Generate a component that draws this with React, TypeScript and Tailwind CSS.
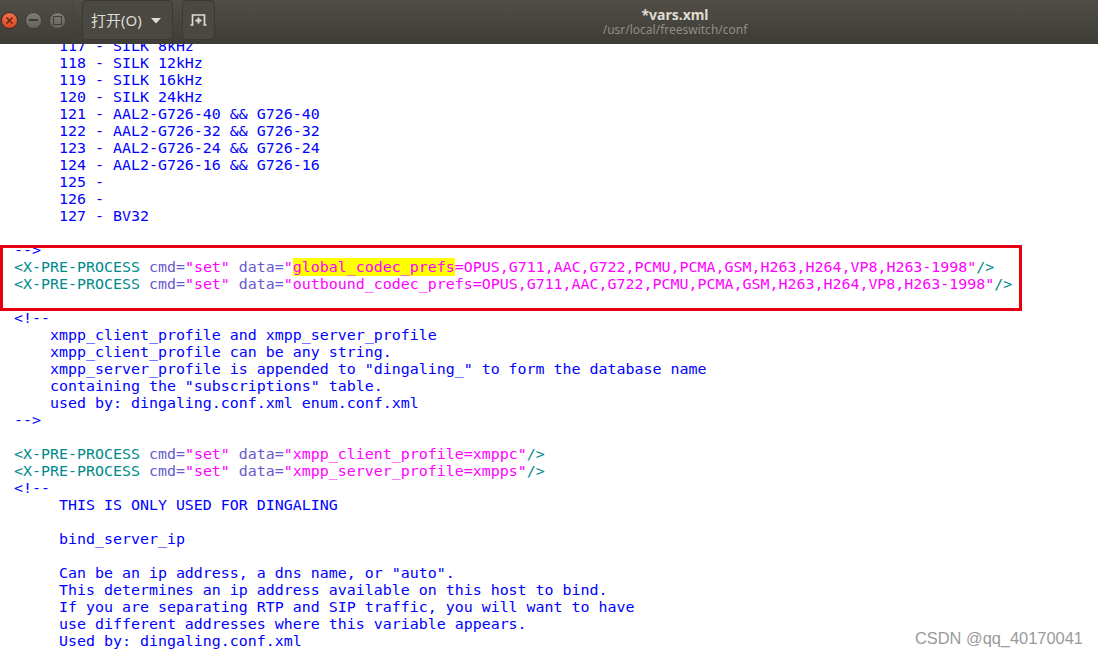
import React from "react";

const T = ({ c }: { c: string }) => <span className="text-[#008a8c]">{c}</span>;
const A = ({ c }: { c: string }) => <span className="text-[#6a5acd]">{c}</span>;
const S = ({ c }: { c: string }) => <span className="text-[#ff00ff]">{c}</span>;

function Pre({ value }: { value: React.ReactNode }) {
  return (
    <div className="h-[17px]">
      <T c="<X-PRE-PROCESS " />
      <A c="cmd=" />
      <S c='"set"' />
      <A c=" data=" />
      {value}
      <T c="/>" />
    </div>
  );
}

const blueTop = [
  "     117 - SILK 8kHz",
  "     118 - SILK 12kHz",
  "     119 - SILK 16kHz",
  "     120 - SILK 24kHz",
  "     121 - AAL2-G726-40 && G726-40",
  "     122 - AAL2-G726-32 && G726-32",
  "     123 - AAL2-G726-24 && G726-24",
  "     124 - AAL2-G726-16 && G726-16",
  "     125 -",
  "     126 -",
  "     127 - BV32",
  " ",
  "-->",
];
const blueMid = [
  " ",
  "<!--",
  "    xmpp_client_profile and xmpp_server_profile",
  "    xmpp_client_profile can be any string.",
  '    xmpp_server_profile is appended to "dingaling_" to form the database name',
  '    containing the "subscriptions" table.',
  "    used by: dingaling.conf.xml enum.conf.xml",
  "-->",
  " ",
];
const blueEnd = [
  "<!--",
  "     THIS IS ONLY USED FOR DINGALING",
  " ",
  "     bind_server_ip",
  " ",
  '     Can be an ip address, a dns name, or "auto".',
  "     This determines an ip address available on this host to bind.",
  "     If you are separating RTP and SIP traffic, you will want to have",
  "     use different addresses where this variable appears.",
  "     Used by: dingaling.conf.xml",
];

const Blue = ({ lines }: { lines: string[] }) => (
  <>
    {lines.map((l, i) => (
      <div key={i} className="h-[17px] text-[#0000ff]">{l}</div>
    ))}
  </>
);

const codecs = "OPUS,G711,AAC,G722,PCMU,PCMA,GSM,H263,H264,VP8,H263-1998";

export default function App() {
  return (
    <div className="relative flex h-[655px] w-[1098px] flex-col overflow-hidden bg-white">
      <header className="z-10 flex h-[44px] shrink-0 items-center bg-gradient-to-b from-[#514e47] to-[#3d3c37] font-['Noto_Sans','Noto_Sans_CJK_SC',sans-serif]">
        <div className="mb-[4px] ml-[1px] flex items-center gap-[7px]">
          <div className="flex h-[17px] w-[17px] items-center justify-center rounded-full border border-[#3c2a20] bg-gradient-to-b from-[#f0714a] to-[#d9481f]">
            <svg width="9" height="9" viewBox="0 0 9 9"><path d="M1.5 1.5l6 6M7.5 1.5l-6 6" stroke="#5b2412" strokeWidth="1.4" /></svg>
          </div>
          <div className="flex h-[17px] w-[17px] items-center justify-center rounded-full border border-[#3f3e39] bg-gradient-to-b from-[#7e7c75] to-[#66645e]">
            <div className="h-[1.5px] w-[9px] bg-[#3d3c37]" />
          </div>
          <div className="flex h-[17px] w-[17px] items-center justify-center rounded-full border border-[#3f3e39] bg-gradient-to-b from-[#7e7c75] to-[#66645e]">
            <div className="h-[9px] w-[9px] border border-[#3d3c37]" />
          </div>
        </div>
        <div className="ml-[7px] h-full w-px bg-[#45433e]" />
        <div className="ml-[8px] mb-[4px] flex h-[40px] w-[91px] items-center rounded-[4px] border border-[#3a3934] bg-[#4a4842] pl-[8px] text-[15px] text-[#dfdbd2]">
          <span className="mt-[1px]">打开(O)</span>
          <svg className="ml-[9px] mt-[2px]" width="10" height="6" viewBox="0 0 10 6"><path d="M0 0h10L5 5.5z" fill="#dfdbd2" /></svg>
        </div>
        <div className="ml-[9px] mb-[4px] flex h-[40px] w-[33px] items-center justify-center rounded-[4px] border border-[#3a3934] bg-[#4a4842]">
          <svg className="mt-[-1px]" width="17" height="12" viewBox="0 0 17 12" fill="none" stroke="#dfdbd2">
            <path d="M2.5 11V1h12v10M0.5 11h3M13.5 11h3" strokeWidth="1.7" />
            <path d="M8.5 3.5v6M5.5 6.5h6" strokeWidth="2" />
          </svg>
        </div>
        <div className="ml-[366px] flex w-[188px] flex-col items-center leading-[15px]">
          <span className="text-[14px] font-bold text-[#dfdbd2]">*vars.xml</span>
          <span className="text-[12px] text-[#918d85]">/usr/local/freeswitch/conf</span>
        </div>
      </header>
      <main className="min-h-0 flex-1 overflow-hidden">
        <div className="mt-[-6px] whitespace-pre pl-[14px] font-['DejaVu_Sans_Mono',monospace] text-[14.95px] leading-[17px]">
          <Blue lines={blueTop} />
          <Pre
            value={
              <>
                <S c='"' />
                <span className="bg-[#ffff00] text-[#ff00ff]">global_codec_prefs</span>
                <S c={`=${codecs}"`} />
              </>
            }
          />
          <Pre value={<S c={`"outbound_codec_prefs=${codecs}"`} />} />
          <Blue lines={blueMid} />
          <Pre value={<S c='"xmpp_client_profile=xmppc"' />} />
          <Pre value={<S c='"xmpp_server_profile=xmpps"' />} />
          <Blue lines={blueEnd} />
        </div>
      </main>
      <div className="absolute left-0 top-[245px] h-[66px] w-[1022px] border-[3px] border-[#e60012]" />
      <div className="absolute left-[915px] top-[628px] font-['Liberation_Sans',sans-serif] text-[16.4px] leading-[20px] text-[#9a9a9a]">
        CSDN @qq_40170041
      </div>
    </div>
  );
}
